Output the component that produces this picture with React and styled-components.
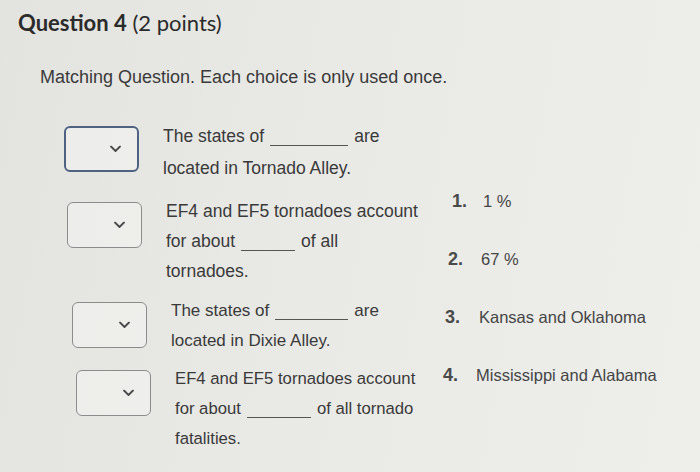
import styled, { createGlobalStyle } from "styled-components";

const GlobalStyle = createGlobalStyle`
  html, body {
    margin : 0;
    padding : 0;
  }
  body {
    width : 700px;
    height : 472px;
    overflow : hidden;
    background : linear-gradient(100deg, #e3e3e0 0%, #e9e9e6 45%, #eeeeeb 100%);
    font-family : "Liberation Sans", Arial, sans-serif;
    color : #383838;
  }
`;

const Page = styled.div`
  padding : 8px 0 0 18px;
`;

const Title = styled.h2`
  margin : 0;
  font-family : Lato, "Liberation Sans", sans-serif;
  font-size : 22px;
  font-weight : 400;
  line-height : 30px;
  color : #2b2b2b;

  b {
    font-weight : 700;
  }
`;

const Instructions = styled.p`
  margin : 27px 0 0 22px;
  font-size : 18px;
  line-height : 24px;
  color : #3a3a3a;
`;

const Matching = styled.div`
  display : flex;
  margin-top : 31px;
`;

const Prompts = styled.div`
  display : flex;
  flex-direction : column;
  width : 387px;
  margin-left : 38px;
`;

const Row = styled.div`
  display : flex;
  align-items : flex-start;
  gap : 24px;
  margin-top : ${p => p.$top}px;
  padding-left : ${p => p.$shift}px;
`;

const Select = styled.div`
  position : relative;
  flex : none;
  width : 75px;
  height : 46px;
  margin-top : 6px;
  box-sizing : border-box;
  border : ${p => p.$focused ? "2px solid #4f6281" : "1.3px solid #8c8c8c"};
  border-radius : 6px;
  background : rgba(245, 245, 243, 0.5);

  svg {
    position : absolute;
    right : 16px;
    top : 50%;
    transform : translateY(-50%);
  }
`;

const Prompt = styled.div`
  font-size : ${p => p.$size}px;
  line-height : ${p => p.$tall ? 32 : 30}px;
  color : #3a3a3a;
  white-space : nowrap;
`;

const Blank = styled.span`
  display : inline-block;
  width : ${p => p.$w}px;
  margin : 0 6px;
  border-bottom : 1.4px solid #555;
  vertical-align : -4px;
`;

const Choices = styled.ol`
  list-style : none;
  margin : 66px 0 0 0;
  padding : 0;
  display : flex;
  flex-direction : column;
  gap : 28px;
`;

const Choice = styled.li`
  display : flex;
  align-items : center;
  height : 30px;
  padding-left : ${p => p.$shift}px;
  white-space : nowrap;
`;

const Num = styled.span`
  width : ${p => p.$w}px;
  font-size : 18px;
  font-weight : 700;
  color : #4a4a4a;
`;

const ChoiceText = styled.span`
  font-size : 16.5px;
  color : #454545;
`;

const Chevron = () => (
  <svg width="11" height="7" viewBox="0 0 11 7" fill="none">
    <path d="M1 1l4.5 4.5L10 1" stroke="#4a4a4a" strokeWidth="1.8" strokeLinecap="round" strokeLinejoin="round" />
  </svg>
);

const rows = [
  {
    shift: 8, top: 0, size: 17.5, focused: true, tall: true,
    text: <>The states of<Blank $w={78} />are<br />located in Tornado Alley.</>,
  },
  {
    shift: 11, top: 12, size: 17.5,
    text: <>EF4 and EF5 tornadoes account<br />for about<Blank $w={54} />of all<br />tornadoes.</>,
  },
  {
    shift: 16, top: 10, size: 17,
    text: <>The states of<Blank $w={73} />are<br />located in Dixie Alley.</>,
  },
  {
    shift: 20, top: 8, size: 16.7,
    text: <>EF4 and EF5 tornadoes account<br />for about<Blank $w={64} />of all tornado<br />fatalities.</>,
  },
];

const choices = [
  { n: "1.", text: "1 %", shift: 9, w: 31 },
  { n: "2.", text: "67 %", shift: 5, w: 33 },
  { n: "3.", text: "Kansas and Oklahoma", shift: 2, w: 34 },
  { n: "4.", text: "Mississippi and Alabama", shift: 0, w: 33 },
];

export default function App() {
  return (
    <>
      <GlobalStyle />
      <Page>
        <Title><b>Question 4</b> (2 points)</Title>
        <Instructions>Matching Question. Each choice is only used once.</Instructions>
        <Matching>
          <Prompts>
            {rows.map((r, i) => (
              <Row key={i} $shift={r.shift} $top={r.top}>
                <Select $focused={r.focused}>
                  <Chevron />
                </Select>
                <Prompt $tall={r.tall} $size={r.size}>{r.text}</Prompt>
              </Row>
            ))}
          </Prompts>
          <Choices>
            {choices.map(c => (
              <Choice key={c.n} $shift={c.shift}>
                <Num $w={c.w}>{c.n}</Num>
                <ChoiceText>{c.text}</ChoiceText>
              </Choice>
            ))}
          </Choices>
        </Matching>
      </Page>
    </>
  );
}
